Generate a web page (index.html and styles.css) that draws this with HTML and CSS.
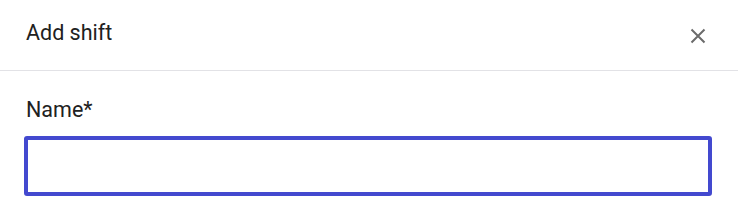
FILE: index.html
```html
<!DOCTYPE html>
<html lang="en">

<head>
  <meta charset="UTF-8">
  <meta name="viewport" content="width=device-width, initial-scale=1.0">
  <title>Add shift</title>
  <link rel="stylesheet" href="styles.css">
</head>

<body>
  <div class="dialog">
    <div class="dialogHeader">
      <span class="dialogTitle">Add shift</span>
      <button class="closeBtn" aria-label="Close">
        <svg width="16" height="16" viewBox="0 0 16 16">
          <path d="M1.5 1.5 L14.5 14.5 M14.5 1.5 L1.5 14.5" stroke="#6b6b6b" stroke-width="2" fill="none" />
        </svg>
      </button>
    </div>
    <div class="dialogBody">
      <label class="fieldLabel" for="shiftName">Name*</label>
      <input id="shiftName" class="fieldInput" type="text">
    </div>
  </div>
</body>

</html>
```

FILE: styles.css
```css
body {
  margin: 0;
  background-color: #fff;
  font-family: Roboto, "Liberation Sans", sans-serif;
  color: #212121;
}

.dialog {
  width: 738px;
}

.dialogHeader {
  height: 70px;
  display: flex;
  justify-content: space-between;
  align-items: center;
  padding: 0 28px 0 26px;
  border-bottom: 1px solid #e2e2e6;
}

.dialogTitle {
  font-size: 21.5px;
  margin-top: -6px;
}

.closeBtn {
  width: 24px;
  height: 24px;
  padding: 0;
  margin-top: 2px;
  border: none;
  background: none;
  display: flex;
  align-items: center;
  justify-content: center;
  cursor: pointer;
}

.dialogBody {
  display: flex;
  flex-direction: column;
  padding: 27px 26px 0 24px;
}

.fieldLabel {
  font-size: 21.5px;
  margin-left: 2px;
  line-height: 24px;
}

.fieldInput {
  margin-top: 14px;
  height: 60px;
  box-sizing: border-box;
  border: 4px solid #4349cf;
  border-radius: 3px;
  outline: none;
  font-size: 16px;
}
```
